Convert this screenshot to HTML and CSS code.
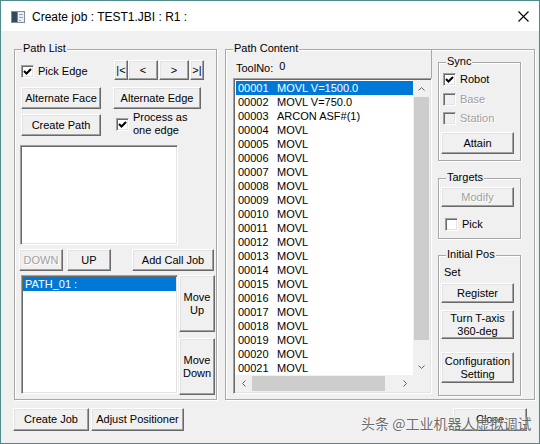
FILE: index.html
```html
<!DOCTYPE html>
<html lang="en">
<head>
  <meta charset="UTF-8" />
  <title>Create job : TEST1.JBI : R1 :</title>
  <link rel="stylesheet" href="styles.css">
</head>
<body>

<div class="window">
  <div class="titlebar">
    <svg class="app-icon" width="14" height="12" viewBox="0 0 14 12">
      <rect x="0" y="0" width="14" height="12" fill="#7f8d99"/>
      <rect x="1" y="1" width="5" height="10" fill="#34495c"/>
      <rect x="7" y="1" width="6" height="10" fill="#e9eef2"/>
      <rect x="8" y="3" width="4" height="1" fill="#9aa7b2"/>
      <rect x="8" y="6" width="4" height="1" fill="#9aa7b2"/>
      <rect x="8" y="9" width="2" height="1" fill="#9aa7b2"/>
    </svg>
    <span class="title">Create job : TEST1.JBI : R1 :</span>
    <svg class="close-x" width="11" height="11" viewBox="0 0 11 11">
      <path d="M0.5 0.5 L10.5 10.5 M10.5 0.5 L0.5 10.5" stroke="#000" stroke-width="1.1" fill="none"/>
    </svg>
  </div>

  <div class="client">
    <div class="main">

      <!-- left: path list -->
      <div class="group path-list">
        <span class="group-title">Path List</span>

        <div class="row row-a">
          <div class="check pick-edge">
            <span class="box"><svg width="9" height="9" viewBox="0 0 9 9"><path d="M1 4 L3.5 6.5 L8 2" stroke="#000" stroke-width="2" fill="none"/></svg></span>
            <span>Pick Edge</span>
          </div>
          <div class="nav">
            <button class="btn nav-end">|&lt;</button>
            <button class="btn nav-step">&lt;</button>
            <button class="btn nav-step">&gt;</button>
            <button class="btn nav-end">&gt;|</button>
          </div>
        </div>

        <div class="row row-b">
          <button class="btn btn-face">Alternate Face</button>
          <button class="btn btn-edge">Alternate Edge</button>
        </div>

        <div class="row row-c">
          <button class="btn btn-face">Create Path</button>
          <div class="check process">
            <span class="box"><svg width="9" height="9" viewBox="0 0 9 9"><path d="M1 4 L3.5 6.5 L8 2" stroke="#000" stroke-width="2" fill="none"/></svg></span>
            <span class="two-line">Process as<br>one edge</span>
          </div>
        </div>

        <div class="listbox edge-list"></div>

        <div class="row row-d">
          <button class="btn btn-down disabled">DOWN</button>
          <button class="btn btn-up">UP</button>
          <button class="btn btn-call">Add Call Job</button>
        </div>

        <div class="row row-e">
          <div class="listbox paths">
            <div class="item selected">PATH_01 :</div>
          </div>
          <div class="move-col">
            <button class="btn btn-move">Move<br>Up</button>
            <button class="btn btn-move">Move<br>Down</button>
          </div>
        </div>
      </div>

      <!-- right: path content -->
      <div class="group path-content">
        <span class="group-title">Path Content</span>

        <div class="content-col">
          <div class="tool-row">
            <span>ToolNo:</span>
            <span class="tool-no">0</span>
          </div>

          <div class="listbox job-list">
            <div class="lines">
              <div class="item selected"><span class="num">00001</span>MOVL V=1500.0</div>
              <div class="item"><span class="num">00002</span>MOVL V=750.0</div>
              <div class="item"><span class="num">00003</span>ARCON ASF#(1)</div>
              <div class="item"><span class="num">00004</span>MOVL</div>
              <div class="item"><span class="num">00005</span>MOVL</div>
              <div class="item"><span class="num">00006</span>MOVL</div>
              <div class="item"><span class="num">00007</span>MOVL</div>
              <div class="item"><span class="num">00008</span>MOVL</div>
              <div class="item"><span class="num">00009</span>MOVL</div>
              <div class="item"><span class="num">00010</span>MOVL</div>
              <div class="item"><span class="num">00011</span>MOVL</div>
              <div class="item"><span class="num">00012</span>MOVL</div>
              <div class="item"><span class="num">00013</span>MOVL</div>
              <div class="item"><span class="num">00014</span>MOVL</div>
              <div class="item"><span class="num">00015</span>MOVL</div>
              <div class="item"><span class="num">00016</span>MOVL</div>
              <div class="item"><span class="num">00017</span>MOVL</div>
              <div class="item"><span class="num">00018</span>MOVL</div>
              <div class="item"><span class="num">00019</span>MOVL</div>
              <div class="item"><span class="num">00020</span>MOVL</div>
              <div class="item"><span class="num">00021</span>MOVL</div>
            </div>

            <div class="vscroll">
              <span class="arrow"><svg width="7" height="4" viewBox="0 0 7 4"><path d="M0.5 3.5 L3.5 0.5 L6.5 3.5" stroke="#606060" fill="none"/></svg></span>
              <span class="vthumb"></span>
              <span class="vtrack"></span>
              <span class="arrow"><svg width="7" height="4" viewBox="0 0 7 4"><path d="M0.5 0.5 L3.5 3.5 L6.5 0.5" stroke="#606060" fill="none"/></svg></span>
            </div>

            <div class="hscroll">
              <span class="arrow"><svg width="4" height="7" viewBox="0 0 4 7"><path d="M3.5 0.5 L0.5 3.5 L3.5 6.5" stroke="#606060" fill="none"/></svg></span>
              <span class="hthumb"></span>
              <span class="htrack"></span>
              <span class="arrow"><svg width="4" height="7" viewBox="0 0 4 7"><path d="M0.5 0.5 L3.5 3.5 L0.5 6.5" stroke="#606060" fill="none"/></svg></span>
            </div>
            <div class="corner"></div>
          </div>
        </div>

        <div class="side-col">
          <div class="group sync">
            <span class="group-title">Sync</span>
            <div class="check robot">
              <span class="box"><svg width="9" height="9" viewBox="0 0 9 9"><path d="M1 4 L3.5 6.5 L8 2" stroke="#000" stroke-width="2" fill="none"/></svg></span>
              <span>Robot</span>
            </div>
            <div class="check base disabled">
              <span class="box"></span>
              <span>Base</span>
            </div>
            <div class="check station disabled">
              <span class="box"></span>
              <span>Station</span>
            </div>
            <button class="btn btn-side btn-attain">Attain</button>
          </div>

          <div class="group targets">
            <span class="group-title">Targets</span>
            <button class="btn btn-side btn-modify disabled">Modify</button>
            <div class="check pick">
              <span class="box"></span>
              <span>Pick</span>
            </div>
          </div>

          <div class="group initial">
            <span class="group-title">Initial Pos</span>
            <div class="set-caption">Set</div>
            <button class="btn btn-side btn-register">Register</button>
            <button class="btn btn-side btn-turn">Turn T-axis<br>360-deg</button>
            <button class="btn btn-side btn-config">Configuration<br>Setting</button>
          </div>
        </div>
      </div>
    </div>

    <div class="bottom">
      <button class="btn btn-create">Create Job</button>
      <button class="btn btn-adjust">Adjust Positioner</button>
      <button class="btn btn-close">Close</button>
    </div>
  </div>

  <div class="watermark">头条 @工业机器人虚拟调试</div>
</div>

</body>
</html>
```

FILE: styles.css
```css
* {
  box-sizing: border-box;
}

body {
  margin: 0;
  font-family: "Liberation Sans", Arial, sans-serif;
  font-size: 11px;
  color: #000;
}

.window {
  position: relative;
  width: 540px;
  height: 444px;
  border: 1px solid #4f8a8c;
  background: #f0f0f0;
  display: flex;
  flex-direction: column;
}

/* title bar */

.titlebar {
  height: 30px;
  flex-shrink: 0;
  background: #fff;
  display: flex;
  align-items: center;
  padding-left: 10px;
}

.app-icon {
  display: block;
  margin-top: 1px;
}

.title {
  margin-left: 7px;
  font-size: 12px;
  margin-top: 1px;
}

.close-x {
  display: block;
  margin-left: auto;
  margin-right: 10px;
  margin-top: 1px;
}

/* client area */

.client {
  flex: 1;
  padding: 18px 0 0 13px;
}

.main {
  display: flex;
  height: 351px;
}

.group {
  position: relative;
  border: 1px solid #a8a8a8;
  box-shadow: inset 1px 1px 0 #fff, 1px 1px 0 #fff;
}

.group-title {
  position: absolute;
  top: -8px;
  left: 7px;
  padding: 0 1px;
  line-height: 13px;
  background: #f0f0f0;
  white-space: nowrap;
}

/* classic controls */

.btn {
  display: block;
  margin: 0;
  padding: 0;
  font-family: inherit;
  font-size: 11px;
  line-height: 13px;
  color: #000;
  background: #f0f0f0;
  border: 1px solid;
  border-color: #fff #696969 #696969 #fff;
  box-shadow: inset -1px -1px 0 #a0a0a0, inset 1px 1px 0 #e3e3e3;
  text-align: center;
}

.btn.disabled {
  color: #a0a0a0;
  text-shadow: 1px 1px 0 #fff;
}

.listbox {
  background: #fff;
  border: 1px solid;
  border-color: #a0a0a0 #fff #fff #a0a0a0;
  box-shadow: inset 1px 1px 0 #696969, inset -1px -1px 0 #e3e3e3;
}

.check {
  display: flex;
  align-items: center;
  line-height: 13px;
}

.box {
  width: 13px;
  height: 13px;
  flex-shrink: 0;
  margin-right: 4px;
  display: flex;
  align-items: center;
  justify-content: center;
  background: #fff;
  border: 1px solid;
  border-color: #a0a0a0 #fff #fff #a0a0a0;
  box-shadow: inset 1px 1px 0 #696969, inset -1px -1px 0 #e3e3e3;
}

.box svg {
  display: block;
}

.check.disabled {
  color: #a0a0a0;
  text-shadow: 1px 1px 0 #fff;
}

.check.disabled .box {
  background: #f0f0f0;
}

.item {
  height: 14px;
  line-height: 14px;
  padding-left: 2px;
  white-space: nowrap;
}

.item.selected {
  background: #0078d7;
  color: #fff;
}

/* path list group */

.path-list {
  width: 203px;
  padding: 10px 0 0 6px;
}

.row {
  display: flex;
}

.row-a {
  height: 20px;
}

.pick-edge {
  width: 93px;
  align-self: flex-start;
  margin-top: 5px;
}

.nav {
  display: flex;
  height: 20px;
}

.nav-end {
  width: 14px;
}

.nav-step {
  width: 30px;
  margin-right: 1px;
}

.row-b {
  margin-top: 7px;
  height: 22px;
}

.btn-face {
  width: 80px;
}

.btn-edge {
  width: 88px;
  margin-left: 12px;
}

.row-c {
  margin-top: 5px;
  height: 22px;
}

.process {
  margin-left: 15px;
  align-items: flex-start;
}

.process .box {
  margin-top: 4px;
}

.two-line {
  margin-top: -3px;
}

.edge-list {
  width: 158px;
  height: 100px;
  margin: 9px 0 0 -1px;
}

.row-d {
  margin-top: 4px;
  height: 22px;
}

.btn-down {
  width: 44px;
  margin-left: -2px;
}

.btn-up {
  width: 44px;
  margin-left: 4px;
}

.btn-call {
  width: 82px;
  margin-left: 21px;
}

.row-e {
  margin-top: 4px;
}

.paths {
  width: 157px;
  height: 119px;
  padding: 1px 1px 0 1px;
}

.paths .item {
  padding-left: 2px;
}

.move-col {
  margin-left: 1px;
}

.btn-move {
  width: 36px;
  height: 57px;
}

.btn-move + .btn-move {
  margin-top: 6px;
}

/* path content group */

.path-content {
  width: 310px;
  margin-left: 8px;
  padding-left: 7px;
  display: flex;
}

.content-col {
  width: 199px;
}

.tool-row {
  height: 28px;
  border-right: 1px solid #a8a8a8;
  padding: 12px 0 0 3px;
  line-height: 13px;
  display: flex;
}

.tool-no {
  margin-left: 6px;
  margin-top: -2px;
}

.job-list {
  height: 316px;
  display: grid;
  grid-template-columns: 1fr 17px;
  grid-template-rows: 1fr 17px;
  padding: 1px;
}

.lines {
  padding: 1px 0 0 1px;
  overflow: hidden;
}

.num {
  display: inline-block;
  width: 39px;
}

.vscroll,
.hscroll {
  display: flex;
  background: #f0f0f0;
}

.vscroll {
  flex-direction: column;
}

.arrow {
  width: 17px;
  height: 17px;
  flex-shrink: 0;
  display: flex;
  align-items: center;
  justify-content: center;
}

.arrow svg {
  display: block;
}

.vthumb {
  height: 243px;
  margin: 0 1px;
  background: #cdcdcd;
}

.vtrack,
.htrack {
  flex: 1;
}

.hthumb {
  width: 133px;
  margin: 1px 0;
  background: #cdcdcd;
}

.corner {
  background: #f0f0f0;
}

.side-col {
  width: 83px;
  margin-left: 6px;
}

.sync {
  margin-top: 12px;
  height: 99px;
  padding: 10px 0 0 4px;
}

.base {
  margin-top: 7px;
}

.station {
  margin-top: 6px;
}

.btn-side {
  width: 73px;
  margin-left: -2px;
}

.btn-attain {
  height: 22px;
  margin-top: 7px;
}

.targets {
  margin-top: 17px;
  height: 61px;
  padding: 8px 0 0 4px;
}

.btn-modify {
  height: 20px;
}

.pick {
  margin: 11px 0 0 2px;
}

.initial {
  margin-top: 16px;
  height: 141px;
  padding: 10px 0 0 5px;
}

.set-caption {
  line-height: 13px;
}

.initial .btn-side {
  margin-left: -3px;
}

.btn-register {
  height: 20px;
  margin-top: 4px;
}

.btn-turn {
  height: 29px;
  margin-top: 7px;
}

.btn-config {
  height: 31px;
  margin-top: 13px;
}

/* bottom buttons */

.bottom {
  display: flex;
  margin-top: 8px;
  height: 23px;
}

.btn-create {
  width: 76px;
  margin-left: -1px;
}

.btn-adjust {
  width: 93px;
  margin-left: 2px;
}

.btn-close {
  width: 74px;
  margin-left: auto;
  margin-right: 12px;
}

.watermark {
  position: absolute;
  left: 360px;
  top: 413px;
  font-family: "Noto Sans CJK SC", sans-serif;
  font-size: 14px;
  line-height: 18px;
  color: rgba(70, 70, 70, 0.8);
  text-shadow: 0 0 2px #fff;
  white-space: nowrap;
}
```
